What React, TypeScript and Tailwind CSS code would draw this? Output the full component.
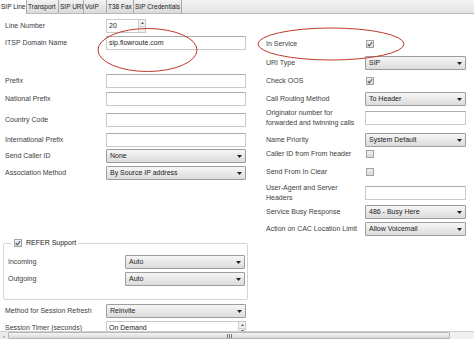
import React from 'react';

function Arrow() {
  return (
    <svg width="5" height="3" viewBox="0 0 5 3" className="shrink-0">
      <path d="M0 0h5L2.5 3z" fill="#222" />
    </svg>
  );
}

function TextBox({ value, w = 'w-[140px]' }: { value?: string; w?: string }) {
  return (
    <div className={`${w} h-[14px] bg-white border border-[#c9c9c9] border-t-[#aeaeae] flex items-center pl-[2px] text-[#222]`}>
      {value}
    </div>
  );
}

function Select({ value, w = 'w-[140px]' }: { value: string; w?: string }) {
  return (
    <div className={`${w} h-[14px] rounded-[1px] border border-[#9d9d9d] bg-gradient-to-b from-[#f6f6f6] to-[#dcdcdc] flex items-center justify-between pl-[3px] pr-[3px] text-[#222]`}>
      <span>{value}</span>
      <Arrow />
    </div>
  );
}

function Check({ checked }: { checked?: boolean }) {
  return (
    <div className="w-[8px] h-[8px] border border-[#a3a3a3] bg-gradient-to-b from-[#f0f0f0] to-[#dadada] flex items-center justify-center">
      {checked && (
        <svg width="6" height="6" viewBox="0 0 6 6">
          <path d="M0.8 3.2 2.3 4.8 5.2 1" fill="none" stroke="#4a5a70" strokeWidth="1.1" />
        </svg>
      )}
    </div>
  );
}

function Spinner({ both }: { both?: boolean }) {
  return (
    <div className="w-[7px] h-full flex flex-col border-l border-[#d0d0d0]">
      <div className="flex-1 flex items-center justify-center bg-[#f0f0f0] border-b border-[#d0d0d0]">
        <svg width="3" height="2" viewBox="0 0 3 2"><path d="M0 2h3L1.5 0z" fill="#555" /></svg>
      </div>
      <div className="flex-1 flex items-center justify-center bg-[#f0f0f0]">
        {both && <svg width="3" height="2" viewBox="0 0 3 2"><path d="M0 0h3L1.5 2z" fill="#555" /></svg>}
      </div>
    </div>
  );
}

const TABS = [
  { label: 'SIP Line', w: 'w-[27px]', active: true },
  { label: 'Transport', w: 'w-[32px]' },
  { label: 'SIP URI', w: 'w-[25px]' },
  { label: 'VoIP', w: 'w-[23px]' },
  { label: 'T38 Fax', w: 'w-[27px]' },
  { label: 'SIP Credentials', w: 'w-[48px]' },
];

export default function App() {
  return (
    <div className="relative w-[474px] h-[339px] bg-white overflow-hidden flex flex-col font-['Liberation_Sans',Arial,sans-serif] text-[7px] leading-[10px] text-[#3d3d3d]">
      {/* tab strip */}
      <div className="h-[14px] shrink-0 flex items-start bg-gradient-to-b from-[#f5f5f5] to-[#e3e3e3] border-b border-[#b9b9b9]">
        {TABS.map((t) => (
          <div
            key={t.label}
            className={`${t.w} shrink-0 flex items-center pl-[1px] whitespace-nowrap overflow-hidden text-[6.5px] border-r border-[#a9a9a9] text-[#222] ${t.active ? 'h-[14px] bg-white' : 'h-[13px] bg-gradient-to-b from-[#f2f2f2] to-[#dadada]'}`}
          >
            {t.label}
          </div>
        ))}
      </div>

      {/* form */}
      <div className="flex-1 flex overflow-hidden">
        <div className="w-[262px] shrink-0 flex flex-col">
          <div className="mt-[5px] h-[14px] flex items-center pl-[5px]">
            <div className="w-[101px]">Line Number</div>
            <div className="w-[40px] h-[14px] bg-white border border-[#c9c9c9] flex items-stretch text-[#222]">
              <div className="flex-1 pl-[2px] flex items-center">20</div>
              <Spinner />
            </div>
          </div>
          <div className="mt-[3px] h-[14px] flex items-center pl-[5px]">
            <div className="w-[101px]">ITSP Domain Name</div>
            <TextBox value="sip.flowroute.com" />
          </div>
          <div className="mt-[24px] h-[14px] flex items-center pl-[5px]">
            <div className="w-[101px]">Prefix</div>
            <TextBox />
          </div>
          <div className="mt-[4px] h-[14px] flex items-center pl-[5px]">
            <div className="w-[101px]">National Prefix</div>
            <TextBox />
          </div>
          <div className="mt-[7px] h-[14px] flex items-center pl-[5px]">
            <div className="w-[101px]">Country Code</div>
            <TextBox />
          </div>
          <div className="mt-[6px] h-[14px] flex items-center pl-[5px]">
            <div className="w-[101px]">International Prefix</div>
            <TextBox />
          </div>
          <div className="mt-[2px] h-[14px] flex items-center pl-[5px]">
            <div className="w-[101px]">Send Caller ID</div>
            <Select value="None" />
          </div>
          <div className="mt-[3px] h-[14px] flex items-center pl-[5px]">
            <div className="w-[101px]">Association Method</div>
            <Select value="By Source IP address" />
          </div>

          <fieldset className="mt-[57px] ml-[3px] w-[245px] border border-[#d5d5d5] rounded-[2px] pb-[13px] pl-[4px]">
            <legend className="ml-[4px] px-[2px] h-[12px] flex items-center gap-[4px]">
              <Check checked />
              <span className="text-[#222]">REFER Support</span>
            </legend>
            <div className="mt-[6px] h-[14px] flex items-center">
              <div className="w-[117px]">Incoming</div>
              <Select value="Auto" w="w-[120px]" />
            </div>
            <div className="mt-[3px] h-[14px] flex items-center">
              <div className="w-[117px]">Outgoing</div>
              <Select value="Auto" w="w-[120px]" />
            </div>
          </fieldset>

          <div className="mt-[4px] h-[14px] flex items-center pl-[5px]">
            <div className="w-[101px]">Method for Session Refresh</div>
            <Select value="Reinvite" />
          </div>
          <div className="mt-[3px] h-[14px] flex items-center pl-[5px]">
            <div className="w-[101px]">Session Timer (seconds)</div>
            <div className="w-[140px] h-[14px] bg-white border border-[#c9c9c9] flex items-stretch text-[#222]">
              <div className="flex-1 pl-[2px] flex items-center">On Demand</div>
              <Spinner both />
            </div>
          </div>
        </div>

        <div className="flex-1 flex flex-col pl-[4px]">
          <div className="mt-[23px] h-[14px] flex items-center">
            <div className="w-[99px]">In Service</div>
            <div className="pl-[1px]"><Check checked /></div>
          </div>
          <div className="mt-[5px] h-[14px] flex items-center">
            <div className="w-[99px]">URI Type</div>
            <Select value="SIP" w="w-[101px]" />
          </div>
          <div className="mt-[4px] h-[14px] flex items-center">
            <div className="w-[99px]">Check OOS</div>
            <div className="pl-[1px]"><Check checked /></div>
          </div>
          <div className="mt-[4px] h-[14px] flex items-center">
            <div className="w-[99px]">Call Routing Method</div>
            <Select value="To Header" w="w-[101px]" />
          </div>
          <div className="mt-[2px] h-[20px] flex items-center">
            <div className="w-[99px]">Originator number for<br />forwarded and twinning calls</div>
            <TextBox w="w-[101px]" />
          </div>
          <div className="mt-[5px] h-[14px] flex items-center">
            <div className="w-[99px]">Name Priority</div>
            <Select value="System Default" w="w-[101px]" />
          </div>
          <div className="h-[14px] flex items-center">
            <div className="w-[99px]">Caller ID from From header</div>
            <div className="pl-[1px]"><Check /></div>
          </div>
          <div className="mt-[4px] h-[14px] flex items-center">
            <div className="w-[99px]">Send From In Clear</div>
            <div className="pl-[1px]"><Check /></div>
          </div>
          <div className="mt-[4px] h-[20px] flex items-center">
            <div className="w-[99px]">User-Agent and Server<br />Headers</div>
            <TextBox w="w-[101px]" />
          </div>
          <div className="mt-[2px] h-[14px] flex items-center">
            <div className="w-[99px]">Service Busy Response</div>
            <Select value="486 - Busy Here" w="w-[101px]" />
          </div>
          <div className="mt-[3px] h-[14px] flex items-center">
            <div className="w-[99px]">Action on CAC Location Limit</div>
            <Select value="Allow Voicemail" w="w-[101px]" />
          </div>
        </div>
      </div>

      {/* horizontal scrollbar */}
      <div className="h-[8px] shrink-0 flex bg-[#ececec] border-t border-[#cfcfcf]">
        <div className="w-[8px] flex items-center justify-center text-[6px] text-[#555]">‹</div>
        <div className="w-[442px] flex items-center justify-center bg-gradient-to-b from-[#f4f4f4] to-[#d9d9d9] border border-[#b5b5b5] rounded-[1px]">
          <svg width="5" height="4" viewBox="0 0 5 4">
            <path d="M0.5 0v4M2.5 0v4M4.5 0v4" stroke="#777" strokeWidth="1" />
          </svg>
        </div>
        <div className="flex-1 bg-[#f0f0f0]" />
      </div>

      {/* red annotation ellipses */}
      <svg className="absolute inset-0 pointer-events-none" width="474" height="339">
        <ellipse cx="147.5" cy="50" rx="49.5" ry="21.5" fill="none" stroke="#c0392b" strokeWidth="1" />
        <ellipse cx="331" cy="44" rx="73" ry="16" fill="none" stroke="#c0392b" strokeWidth="1" />
      </svg>
    </div>
  );
}
